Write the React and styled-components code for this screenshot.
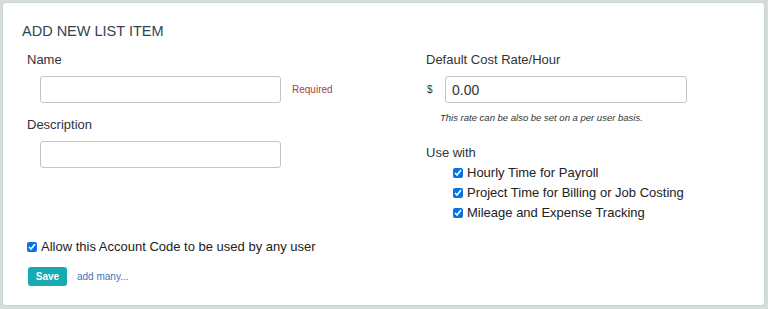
import styled, { createGlobalStyle } from "styled-components";

const GlobalStyle = createGlobalStyle`
  html, body {
    margin: 0;
    padding: 0;
    background: #d5dcdc;
    font-family: "Liberation Sans", Arial, sans-serif;
    color: #333;
  }
`;

const Page = styled.div`
  padding: 3px 4px 5px 3px;
`;

const Card = styled.div`
  background: #fff;
  border-radius: 3px;
  box-shadow: 0 0 0 1px #cdd5d5;
  padding: 20px 19px 19px 19px;
`;

const Title = styled.h2`
  margin: 0;
  font-size: 14.5px;
  line-height: 17px;
  font-weight: normal;
  color: #34444f;
`;

const Columns = styled.div`
  display: grid;
  grid-template-columns: 399px 1fr;
  margin: 12px 0 0 5px;
`;

const Column = styled.div`
  display: flex;
  flex-direction: column;
`;

const Label = styled.div`
  font-size: 13px;
  line-height: 16px;
  color: #333;
  margin-top: ${(p) => p.$top || 0}px;
`;

const FieldRow = styled.div`
  display: flex;
  align-items: center;
  margin-top: 8px;
  padding-left: ${(p) => p.$indent || 0}px;
`;

const TextInput = styled.input`
  box-sizing: border-box;
  width: ${(p) => p.$width || 241}px;
  height: 27px;
  border: 1px solid #c4c4c4;
  border-radius: 3px;
  padding: 0 6px;
  font-family: "Liberation Sans", Arial, sans-serif;
  font-size: 14px;
  color: #333;
  outline: none;
`;

const Required = styled.span`
  font-size: 10px;
  color: #a33f3f;
  margin-left: 11px;
`;

const Currency = styled.span`
  font-size: 10px;
  color: #333;
  width: 18px;
  padding-left: 1px;
`;

const Note = styled.div`
  font-size: 9.5px;
  line-height: 12px;
  font-style: italic;
  color: #333;
  margin: 9px 0 0 14px;
`;

const CheckList = styled.div`
  display: flex;
  flex-direction: column;
  padding: 2px 0 0 27px;
`;

const CheckRow = styled.label`
  display: flex;
  align-items: center;
  gap: 4px;
  font-size: 13px;
  line-height: ${(p) => p.$lh || 20}px;
  color: #222;
`;

const Box = styled.input.attrs({ type: "checkbox" })`
  width: 10px;
  height: 10px;
  margin: 0;
  accent-color: #0a72e8;
`;

const Footer = styled.div`
  display: flex;
  flex-direction: column;
  margin: 16px 0 0 5px;
`;

const Actions = styled.div`
  display: flex;
  align-items: center;
  gap: 10px;
  margin-top: 12px;
  padding-left: 1px;
`;

const SaveButton = styled.button`
  width: 39px;
  height: 19px;
  padding: 0;
  border: none;
  border-radius: 3px;
  background: #16aab2;
  color: #fff;
  font-family: "Liberation Sans", Arial, sans-serif;
  font-size: 10px;
  font-weight: bold;
`;

const LinkText = styled.a`
  font-size: 10px;
  color: #3f74b9;
  text-decoration: none;
`;

export default function App() {
  return (
    <>
      <GlobalStyle />
      <Page>
        <Card>
          <Title>ADD NEW LIST ITEM</Title>
          <Columns>
            <Column>
              <Label>Name</Label>
              <FieldRow $indent={13}>
                <TextInput />
                <Required>Required</Required>
              </FieldRow>
              <Label $top={14}>Description</Label>
              <FieldRow $indent={13}>
                <TextInput />
              </FieldRow>
            </Column>
            <Column>
              <Label>Default Cost Rate/Hour</Label>
              <FieldRow>
                <Currency>$</Currency>
                <TextInput $width={242} defaultValue="0.00" />
              </FieldRow>
              <Note>This rate can be also be set on a per user basis.</Note>
              <Label $top={21}>Use with</Label>
              <CheckList>
                <CheckRow>
                  <Box defaultChecked />
                  Hourly Time for Payroll
                </CheckRow>
                <CheckRow>
                  <Box defaultChecked />
                  Project Time for Billing or Job Costing
                </CheckRow>
                <CheckRow>
                  <Box defaultChecked />
                  Mileage and Expense Tracking
                </CheckRow>
              </CheckList>
            </Column>
          </Columns>
          <Footer>
            <CheckRow $lh={16}>
              <Box defaultChecked />
              Allow this Account Code to be used by any user
            </CheckRow>
            <Actions>
              <SaveButton>Save</SaveButton>
              <LinkText href="#">add many...</LinkText>
            </Actions>
          </Footer>
        </Card>
      </Page>
    </>
  );
}
